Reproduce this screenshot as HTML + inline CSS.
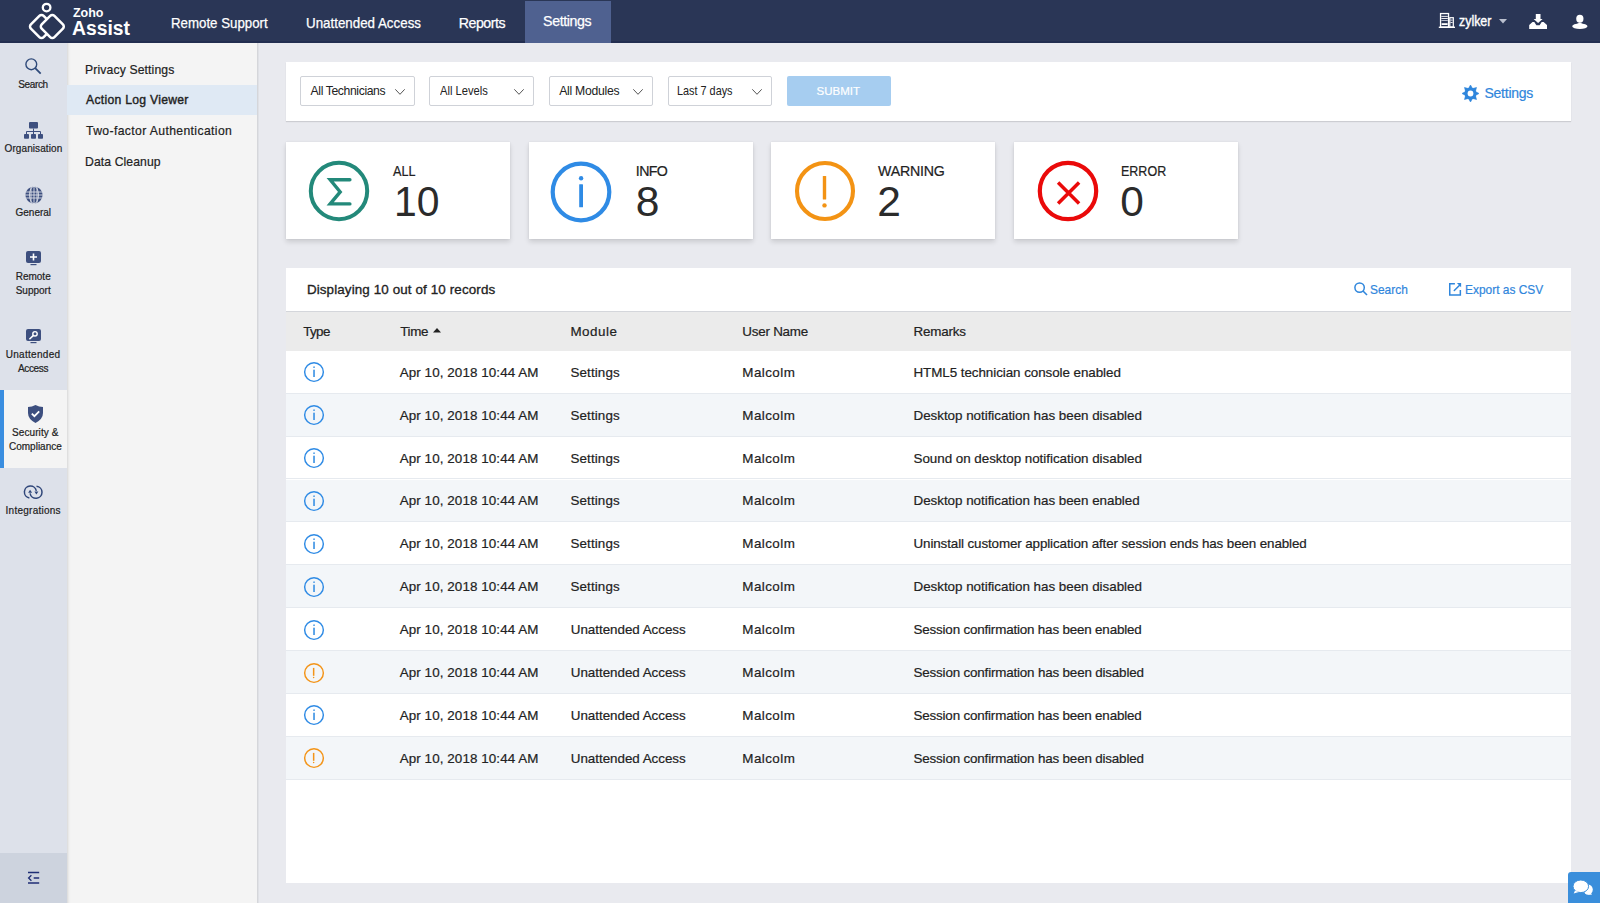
<!DOCTYPE html>
<html><head><meta charset="utf-8">
<style>
*{margin:0;padding:0;box-sizing:border-box}
html,body{width:1600px;height:903px;overflow:hidden}
body{font-family:"Liberation Sans",sans-serif;background:#e9eaef;position:relative;color:#222}
.abs{position:absolute}
svg{position:absolute;overflow:visible}
#hdr{left:0;top:0;width:1600px;height:43px;background:#2a3656;border-bottom:2px solid #222e50}
.nav{position:absolute;top:0;height:43px;line-height:44px;color:#fff;font-size:13.5px;white-space:nowrap}
#tab{left:525px;top:1px;width:86px;height:42px;background:#4f6190}
#side1{left:0;top:43px;width:67px;height:860px;background:#dde1ea}
.si{position:absolute;left:0;width:67px;text-align:center;font-size:10px;line-height:14px;color:#222}
#side2{left:67px;top:43px;width:191px;height:860px;background:#f4f4f4;border-right:1px solid #d5d6da;box-shadow:inset 4px 0 3px -3px rgba(0,0,0,0.13), 1px 0 0 #dfe1e6}
.s2{position:absolute;left:19px;font-size:12.5px;color:#222;white-space:nowrap}
.card{position:absolute;background:#fff}
.dd{position:absolute;top:76px;height:30px;border:1px solid #cfd2d8;border-radius:2px;background:#fff;font-size:11.4px;line-height:28px;padding-left:10px;color:#222;white-space:nowrap}
.dd svg{right:9px;top:12px}
.stat{position:absolute;top:142px;width:224px;height:97px;background:#fff;box-shadow:0 3px 5px rgba(0,0,0,0.13),0 0 2px rgba(0,0,0,0.07)}
.stat .lbl{position:absolute;left:106px;top:21px;font-size:13px;color:#222}
.stat .num{position:absolute;left:106px;top:36px;font-size:40px;color:#222;letter-spacing:-1px}
.stat svg{left:22px;top:18px}
.row{position:absolute;left:286px;width:1285px;height:42.9px;border-bottom:1px solid #e6eaef}
.row.alt{background:#f3f6f9}
.ti{left:16.75px;top:10.45px}
.c{position:absolute;top:0;line-height:42px;font-size:13px;color:#222;white-space:nowrap;letter-spacing:0.2px}
.ic{fill:#3d4f7f}
.t{position:absolute;white-space:nowrap;line-height:1}
.bm{display:inline-block;width:0;height:0}
</style></head><body>
<div id="hdr" class="abs">
  <div id="tab" class="abs"></div>
  <!-- logo -->
  <svg style="left:0;top:0" width="70" height="43" viewBox="0 0 70 43">
    <circle cx="46.6" cy="7.6" r="3.8" fill="none" stroke="#fff" stroke-width="2.3"/>
    <rect x="32.5" y="17.5" width="18" height="18" rx="3" transform="rotate(45 41.5 26.5)" fill="none" stroke="#fff" stroke-width="2.5"/>
    <rect x="43.3" y="17.5" width="18" height="18" rx="3" transform="rotate(45 52.3 26.5)" fill="#2a3656" stroke="#fff" stroke-width="2.5"/>
  </svg>
  <!-- building -->
  <svg style="left:1438px;top:12px" width="18" height="17" viewBox="0 0 18 17">
    <rect x="2.55" y="1.55" width="8" height="13.5" fill="none" stroke="#fff" stroke-width="1.3"/>
    <rect x="3.3" y="3.9" width="6.5" height="0.9" fill="#fff"/>
    <rect x="3.3" y="6.0" width="6.5" height="0.9" fill="#fff"/>
    <rect x="3.3" y="8.1" width="6.5" height="0.9" fill="#c8ccd8"/>
    <rect x="3.6" y="11.2" width="6" height="1.8" fill="#fff"/>
    <rect x="11.8" y="5.7" width="3.5" height="9.3" fill="none" stroke="#fff" stroke-width="1.2"/>
    <rect x="12.4" y="7.6" width="2.2" height="1" fill="#dfe2ea"/>
    <rect x="12.4" y="10" width="2.2" height="1" fill="#dfe2ea"/>
    <rect x="0.8" y="14.6" width="16.2" height="1.4" fill="#fff"/>
  </svg>
  <svg style="left:1499px;top:19px" width="8" height="5" viewBox="0 0 8 5"><path d="M0 0h8l-4 4.5z" fill="#b9bfce"/></svg>
  <!-- download tray -->
  <svg style="left:1528.5px;top:14px" width="19" height="15" viewBox="0 0 19 15">
    <path d="M6.8 0h4.7v5h2.1l-4.5 4l-4.5-4h2.2z" fill="#fff"/>
    <path d="M0.2 11L3.5 7.9H5.3L7.4 11.2H10.6L12.7 7.9H14.6L18 11V14.9H0.2z" fill="#fff"/>
  </svg>
  <!-- user -->
  <svg style="left:1571.5px;top:14px" width="16" height="15" viewBox="0 0 16 15">
    <ellipse cx="7.85" cy="4.75" rx="3.65" ry="3.95" fill="#fff"/>
    <ellipse cx="7.85" cy="12.2" rx="7.65" ry="2.75" fill="#fff"/>
    <path d="M4.5 10.2L7.85 8.6L11.2 10.2z" fill="#fff"/>
  </svg>
</div>
<div id="side1" class="abs">
  <!-- search -->
  <svg style="left:25px;top:15px" width="17" height="17" viewBox="0 0 17 17">
    <circle cx="6.3" cy="6.3" r="5.4" fill="none" stroke="#2f4a7a" stroke-width="1.4"/>
    <path d="M10.2 10.2l5.5 5.5" stroke="#2f4a7a" stroke-width="1.8"/>
  </svg>
  <!-- organisation -->
  <svg style="left:24px;top:79px" width="19" height="17" viewBox="0 0 19 17">
    <rect x="5" y="0" width="9" height="6.5" rx="1" class="ic"/>
    <path d="M9.5 6.5v3M2.5 12v-2.5h14v2.5M9.5 9.5v2.5" stroke="#3d4f7f" stroke-width="1" fill="none"/>
    <rect x="0" y="12" width="5" height="4.8" rx="0.8" class="ic"/>
    <rect x="7" y="12" width="5" height="4.8" rx="0.8" class="ic"/>
    <rect x="14" y="12" width="5" height="4.8" rx="0.8" class="ic"/>
  </svg>
  <!-- globe -->
  <svg style="left:24.5px;top:142.5px" width="18" height="18" viewBox="0 0 18 18">
    <circle cx="9" cy="9" r="8.6" class="ic"/>
    <path d="M0 6h18M0 9h18M0 12h18M6 0v18M9 0v18M12 0v18" stroke="#dce0e9" stroke-width="0.9"/>
    <ellipse cx="9" cy="9" rx="4.5" ry="8.6" fill="none" stroke="#dce0e9" stroke-width="0.9"/>
  </svg>
  <!-- remote support monitor -->
  <svg style="left:26px;top:208px" width="15" height="15" viewBox="0 0 15 15">
    <rect x="0" y="0" width="15" height="12" rx="2" class="ic"/>
    <path d="M7.5 2.5v7M4 6h7" stroke="#fff" stroke-width="1.6"/>
    <path d="M4.5 13.6h6" stroke="#3d4f7f" stroke-width="1.2"/>
  </svg>
  <!-- unattended monitor key -->
  <svg style="left:26px;top:286px" width="15" height="15" viewBox="0 0 15 15">
    <rect x="0" y="0" width="15" height="12" rx="2" class="ic"/>
    <circle cx="9" cy="4.8" r="2.2" fill="none" stroke="#fff" stroke-width="1.4"/>
    <path d="M7.4 6.4l-4 3.8" stroke="#fff" stroke-width="1.5"/>
    <path d="M4.5 13.6h6" stroke="#3d4f7f" stroke-width="1.2"/>
  </svg>
  <div class="abs" style="left:0;top:347px;width:67px;height:78px;background:#f4f4f4"></div>
  <div class="abs" style="left:0;top:347px;width:4px;height:78px;background:#3a8ee0"></div>
  <!-- shield -->
  <svg style="left:28px;top:362px" width="15" height="18" viewBox="0 0 15 18">
    <path d="M7.5 0q3.5 2 7.5 2v6q0 6-7.5 10q-7.5-4-7.5-10v-6q4 0 7.5-2z" class="ic"/>
    <path d="M3.8 8.6l2.6 2.6l4.8-4.8" stroke="#fff" stroke-width="1.8" fill="none"/>
  </svg>
  <!-- integrations -->
  <svg style="left:24px;top:442px" width="19" height="15" viewBox="0 0 19 15">
    <path d="M5.36 12.9A6 6 0 1 1 12.31 5.96" fill="none" stroke="#2f4679" stroke-width="1.5"/>
    <path d="M10.4 6.6h4l-2 3z" fill="#2f4679"/>
    <path d="M12.52 1.32A6 6 0 1 1 6.09 8.34" fill="none" stroke="#2f4679" stroke-width="1.5"/>
    <path d="M4.1 7.8h4l-2-3z" fill="#2f4679"/>
  </svg>
  <div class="abs" style="left:0;top:810px;width:67px;height:50px;background:#cdd3de"></div>
  <svg style="left:28px;top:829px" width="12" height="13" viewBox="0 0 12 13">
    <path d="M0 0.5h11.2M0 11h11.2M5.7 6h5.5" stroke="#1f2e75" stroke-width="1.3"/>
    <path d="M3.4 3.3L0.6 6l2.8 2.7" stroke="#1f2e75" stroke-width="1.3" fill="none"/>
  </svg>
</div>
<div id="side2" class="abs">
  <div class="abs" style="left:0;top:42px;width:190px;height:30px;background:#dfe9f4"></div>
</div>
<!-- filter card -->
<div class="card" style="left:286px;top:62px;width:1285px;height:59px;box-shadow:0 1px 1px rgba(0,0,0,0.12)"></div>
<div class="dd" style="left:300px;width:115px"><svg width="10" height="6" viewBox="0 0 10 6"><path d="M0.3 0.3l4.7 5l4.7-5" fill="none" stroke="#555" stroke-width="1"/></svg></div>
<div class="dd" style="left:429px;width:105px"><svg width="10" height="6" viewBox="0 0 10 6"><path d="M0.3 0.3l4.7 5l4.7-5" fill="none" stroke="#555" stroke-width="1"/></svg></div>
<div class="dd" style="left:549px;width:104px"><svg width="10" height="6" viewBox="0 0 10 6"><path d="M0.3 0.3l4.7 5l4.7-5" fill="none" stroke="#555" stroke-width="1"/></svg></div>
<div class="dd" style="left:668px;width:104px"><svg width="10" height="6" viewBox="0 0 10 6"><path d="M0.3 0.3l4.7 5l4.7-5" fill="none" stroke="#555" stroke-width="1"/></svg></div>
<div class="abs" style="left:787px;top:76px;width:104px;height:30px;background:#a6cdf0;border-radius:2px;color:#fff;font-size:11px;line-height:30px;text-align:center"></div>
<svg style="left:1462px;top:84.6px" width="17" height="17" viewBox="0 0 17 17">
  <polygon points="8.50,0.00 10.53,3.60 14.51,2.49 13.40,6.47 17.00,8.50 13.40,10.53 14.51,14.51 10.53,13.40 8.50,17.00 6.47,13.40 2.49,14.51 3.60,10.53 0.00,8.50 3.60,6.47 2.49,2.49 6.47,3.60" fill="#2f86dc" stroke="#2f86dc" stroke-width="0.6" stroke-linejoin="round"/>
  <circle cx="8.5" cy="8.5" r="5.9" fill="#2f86dc"/>
  <circle cx="8.5" cy="8.5" r="2.9" fill="#fff"/>
</svg>
<!-- stat cards -->
<div class="stat" style="left:286px"></div>
<div class="stat" style="left:529px"></div>
<div class="stat" style="left:771px"></div>
<div class="stat" style="left:1014px"></div>
<svg style="left:308.15px;top:160.1px" width="62" height="62" viewBox="0 0 62 62"><circle cx="31" cy="31" r="28.2" fill="none" stroke="#23897a" stroke-width="4"/><path d="M41.9 19.8H22.2L32.2 31.9L22.2 43.9H41.9" fill="none" stroke="#23897a" stroke-width="3.4" stroke-linecap="round" stroke-linejoin="miter" stroke-miterlimit="10"/></svg>
<svg style="left:550.4px;top:160.8px" width="62" height="62" viewBox="0 0 62 62"><circle cx="31" cy="31" r="28.3" fill="none" stroke="#2f8be5" stroke-width="4.2"/><rect x="29.2" y="23.2" width="3.8" height="23" rx="0.5" fill="#2f8be5"/><circle cx="31.1" cy="17.2" r="2.2" fill="#2f8be5"/></svg>
<svg style="left:794px;top:160.2px" width="62" height="62" viewBox="0 0 62 62"><circle cx="31" cy="31" r="28" fill="none" stroke="#f39314" stroke-width="4.1"/><rect x="28.8" y="15.9" width="3.4" height="23.7" rx="0.5" fill="#f39314"/><circle cx="30.5" cy="45.4" r="2.2" fill="#f39314"/></svg>
<svg style="left:1037px;top:160.35px" width="62" height="62" viewBox="0 0 62 62"><circle cx="31" cy="31" r="28.2" fill="none" stroke="#ea0a0a" stroke-width="4.2"/><path d="M21.1 22.4L42.1 43.4M42.1 22.4L21.1 43.4" stroke="#ea0a0a" stroke-width="3.5" stroke-linecap="butt"/></svg>
<!-- table card -->
<div class="card" style="left:286px;top:268px;width:1285px;height:615px"></div>
<div class="abs" style="left:286px;top:311px;width:1285px;height:1px;background:#d4d6db"></div>
<svg style="left:1354px;top:282px" width="14" height="14" viewBox="0 0 14 14"><circle cx="5.6" cy="5.6" r="4.7" fill="none" stroke="#2f86dc" stroke-width="1.5"/><path d="M9 9l4 4" stroke="#2f86dc" stroke-width="1.6"/></svg>
<svg style="left:1449px;top:283px" width="13" height="13" viewBox="0 0 13 13"><path d="M5.9 0.75H0.75V12.05H11.35V7" fill="none" stroke="#2f86dc" stroke-width="1.5"/><path d="M5.3 7.5L10.6 2.2" stroke="#2f86dc" stroke-width="1.5" stroke-linecap="round"/><path d="M7.9 0H12.1V4.2z" fill="#2f86dc"/></svg>
<div class="abs" style="left:286px;top:312px;width:1285px;height:39px;background:#ebebeb"></div>
<svg style="left:433px;top:328px" width="8" height="5" viewBox="0 0 8 5"><path d="M0 4.5l4-4.5l4 4.5z" fill="#222"/></svg>
<div class="row" style="top:350.80px"><svg class="ti" width="22" height="22" viewBox="0 0 22 22"><circle cx="11" cy="11" r="9.35" fill="none" stroke="#2f8be5" stroke-width="1.45"/><rect x="10.15" y="8.7" width="1.75" height="7.3" fill="#4a9ae6"/><circle cx="11.05" cy="6.2" r="0.85" fill="#4a9ae6"/></svg></div>
<div class="row alt" style="top:393.70px"><svg class="ti" width="22" height="22" viewBox="0 0 22 22"><circle cx="11" cy="11" r="9.35" fill="none" stroke="#2f8be5" stroke-width="1.45"/><rect x="10.15" y="8.7" width="1.75" height="7.3" fill="#4a9ae6"/><circle cx="11.05" cy="6.2" r="0.85" fill="#4a9ae6"/></svg></div>
<div class="row" style="top:436.60px"><svg class="ti" width="22" height="22" viewBox="0 0 22 22"><circle cx="11" cy="11" r="9.35" fill="none" stroke="#2f8be5" stroke-width="1.45"/><rect x="10.15" y="8.7" width="1.75" height="7.3" fill="#4a9ae6"/><circle cx="11.05" cy="6.2" r="0.85" fill="#4a9ae6"/></svg></div>
<div class="row alt" style="top:479.50px"><svg class="ti" width="22" height="22" viewBox="0 0 22 22"><circle cx="11" cy="11" r="9.35" fill="none" stroke="#2f8be5" stroke-width="1.45"/><rect x="10.15" y="8.7" width="1.75" height="7.3" fill="#4a9ae6"/><circle cx="11.05" cy="6.2" r="0.85" fill="#4a9ae6"/></svg></div>
<div class="row" style="top:522.40px"><svg class="ti" width="22" height="22" viewBox="0 0 22 22"><circle cx="11" cy="11" r="9.35" fill="none" stroke="#2f8be5" stroke-width="1.45"/><rect x="10.15" y="8.7" width="1.75" height="7.3" fill="#4a9ae6"/><circle cx="11.05" cy="6.2" r="0.85" fill="#4a9ae6"/></svg></div>
<div class="row alt" style="top:565.30px"><svg class="ti" width="22" height="22" viewBox="0 0 22 22"><circle cx="11" cy="11" r="9.35" fill="none" stroke="#2f8be5" stroke-width="1.45"/><rect x="10.15" y="8.7" width="1.75" height="7.3" fill="#4a9ae6"/><circle cx="11.05" cy="6.2" r="0.85" fill="#4a9ae6"/></svg></div>
<div class="row" style="top:608.20px"><svg class="ti" width="22" height="22" viewBox="0 0 22 22"><circle cx="11" cy="11" r="9.35" fill="none" stroke="#2f8be5" stroke-width="1.45"/><rect x="10.15" y="8.7" width="1.75" height="7.3" fill="#4a9ae6"/><circle cx="11.05" cy="6.2" r="0.85" fill="#4a9ae6"/></svg></div>
<div class="row alt" style="top:651.10px"><svg class="ti" width="22" height="22" viewBox="0 0 22 22"><circle cx="11" cy="11" r="9.35" fill="none" stroke="#f39418" stroke-width="1.45"/><rect x="9.9" y="5.9" width="1.5" height="7.9" fill="#f39418"/><circle cx="10.6" cy="15.5" r="0.75" fill="#f39418"/></svg></div>
<div class="row" style="top:694.00px"><svg class="ti" width="22" height="22" viewBox="0 0 22 22"><circle cx="11" cy="11" r="9.35" fill="none" stroke="#2f8be5" stroke-width="1.45"/><rect x="10.15" y="8.7" width="1.75" height="7.3" fill="#4a9ae6"/><circle cx="11.05" cy="6.2" r="0.85" fill="#4a9ae6"/></svg></div>
<div class="row alt" style="top:736.90px"><svg class="ti" width="22" height="22" viewBox="0 0 22 22"><circle cx="11" cy="11" r="9.35" fill="none" stroke="#f39418" stroke-width="1.45"/><rect x="9.9" y="5.9" width="1.5" height="7.9" fill="#f39418"/><circle cx="10.6" cy="15.5" r="0.75" fill="#f39418"/></svg></div>
<div class="t" id="zoho" style="left:72.90px;top:6.60px;font-size:12.5px;letter-spacing:-0.000px;color:#ffffff;font-weight:bold;">Zoho</div>
<div class="t" id="assist" style="left:71.60px;top:17.91px;font-size:20px;letter-spacing:0.000px;color:#ffffff;transform:scaleX(0.9644);transform-origin:0 0;font-weight:bold;">Assist</div>
<div class="t" id="nav1" style="left:171.10px;top:15.70px;font-size:14.2px;letter-spacing:0.000px;color:#ffffff;transform:scaleX(0.9354);transform-origin:0 0;-webkit-text-stroke:0.25px #fff;">Remote Support</div>
<div class="t" id="nav2" style="left:305.62px;top:15.70px;font-size:14.2px;letter-spacing:0.000px;color:#ffffff;transform:scaleX(0.9405);transform-origin:0 0;-webkit-text-stroke:0.25px #fff;">Unattended Access</div>
<div class="t" id="nav3" style="left:458.70px;top:15.81px;font-size:14.2px;letter-spacing:-0.450px;color:#ffffff;-webkit-text-stroke:0.25px #fff;">Reports</div>
<div class="t" id="nav4" style="left:543.10px;top:14.21px;font-size:14.2px;letter-spacing:-0.386px;color:#ffffff;-webkit-text-stroke:0.25px #fff;">Settings</div>
<div class="t" id="zylker" style="left:1459.44px;top:13.70px;font-size:14px;letter-spacing:0.000px;color:#ffffff;transform:scaleX(0.8859);transform-origin:0 0;-webkit-text-stroke:0.4px #fff;">zylker</div>
<div class="t" id="sb_search" style="left:18.30px;top:80.40px;font-size:10px;letter-spacing:-0.360px;color:#222222;-webkit-text-stroke:0.2px #222222;">Search</div>
<div class="t" id="sb_org" style="left:4.60px;top:144.10px;font-size:10px;letter-spacing:0.082px;color:#222222;-webkit-text-stroke:0.2px #222222;">Organisation</div>
<div class="t" id="sb_gen" style="left:15.50px;top:208.22px;font-size:10px;letter-spacing:0.000px;color:#222222;-webkit-text-stroke:0.2px #222222;">General</div>
<div class="t" id="sb_rs1" style="left:15.70px;top:272.00px;font-size:10px;letter-spacing:-0.000px;color:#222222;-webkit-text-stroke:0.2px #222222;">Remote</div>
<div class="t" id="sb_rs2" style="left:15.70px;top:285.90px;font-size:10px;letter-spacing:-0.000px;color:#222222;-webkit-text-stroke:0.2px #222222;">Support</div>
<div class="t" id="sb_ua1" style="left:5.70px;top:350.00px;font-size:10px;letter-spacing:0.300px;color:#222222;-webkit-text-stroke:0.2px #222222;">Unattended</div>
<div class="t" id="sb_ua2" style="left:18.00px;top:364.40px;font-size:10px;letter-spacing:-0.360px;color:#222222;-webkit-text-stroke:0.2px #222222;">Access</div>
<div class="t" id="sb_sc1" style="left:12.00px;top:428.00px;font-size:10px;letter-spacing:0.100px;color:#222222;-webkit-text-stroke:0.2px #222222;">Security &amp;</div>
<div class="t" id="sb_sc2" style="left:9.00px;top:442.00px;font-size:10px;letter-spacing:0.000px;color:#222222;-webkit-text-stroke:0.2px #222222;">Compliance</div>
<div class="t" id="sb_int" style="left:5.60px;top:506.32px;font-size:10px;letter-spacing:0.245px;color:#222222;-webkit-text-stroke:0.2px #222222;">Integrations</div>
<div class="t" id="s2_priv" style="left:85.10px;top:64.30px;font-size:12.2px;letter-spacing:0.120px;color:#222222;-webkit-text-stroke:0.2px #222222;">Privacy Settings</div>
<div class="t" id="s2_alv" style="left:86.00px;top:94.40px;font-size:12.2px;letter-spacing:0.276px;color:#222222;-webkit-text-stroke:0.38px #222;">Action Log Viewer</div>
<div class="t" id="s2_2fa" style="left:86.00px;top:125.00px;font-size:12.2px;letter-spacing:0.375px;color:#222222;-webkit-text-stroke:0.2px #222222;">Two-factor Authentication</div>
<div class="t" id="s2_dc" style="left:85.10px;top:155.60px;font-size:12.2px;letter-spacing:0.082px;color:#222222;-webkit-text-stroke:0.2px #222222;">Data Cleanup</div>
<div class="t" id="f1" style="left:310.60px;top:85.00px;font-size:12.2px;letter-spacing:-0.386px;color:#222222;">All Technicians</div>
<div class="t" id="f2" style="left:440.00px;top:85.00px;font-size:12.2px;letter-spacing:0.000px;color:#222222;transform:scaleX(0.9171);transform-origin:0 0;">All Levels</div>
<div class="t" id="f3" style="left:559.20px;top:85.00px;font-size:12.2px;letter-spacing:-0.270px;color:#222222;">All Modules</div>
<div class="t" id="f4" style="left:677.14px;top:85.00px;font-size:12.2px;letter-spacing:0.000px;color:#222222;transform:scaleX(0.8909);transform-origin:0 0;">Last 7 days</div>
<div class="t" id="submit" style="left:816.50px;top:86.01px;font-size:11.5px;letter-spacing:0.000px;color:#ffffff;-webkit-text-stroke:0.2px #fff;">SUBMIT</div>
<div class="t" id="setlink" style="left:1484.50px;top:86.11px;font-size:14px;letter-spacing:-0.257px;color:#2f86dc;-webkit-text-stroke:0.2px #2f86dc;">Settings</div>
<div class="t" id="l_all" style="left:392.98px;top:163.82px;font-size:14.2px;letter-spacing:0.000px;color:#222222;transform:scaleX(0.8931);transform-origin:0 0;-webkit-text-stroke:0.2px #222222;">ALL</div>
<div class="t" id="n_all" style="left:393.57px;top:180.61px;font-size:42.5px;letter-spacing:0.000px;color:#2b2b2b;transform:scaleX(0.9625);transform-origin:0 0;">10</div>
<div class="t" id="l_info" style="left:635.80px;top:163.80px;font-size:14.2px;letter-spacing:-0.600px;color:#222222;-webkit-text-stroke:0.2px #222222;">INFO</div>
<div class="t" id="n_info" style="left:635.78px;top:180.51px;font-size:42.5px;letter-spacing:0.000px;color:#2b2b2b;">8</div>
<div class="t" id="l_warn" style="left:878.10px;top:163.80px;font-size:14.2px;letter-spacing:-0.225px;color:#222222;-webkit-text-stroke:0.2px #222222;">WARNING</div>
<div class="t" id="n_warn" style="left:877.27px;top:180.51px;font-size:42.5px;letter-spacing:0.000px;color:#2b2b2b;">2</div>
<div class="t" id="l_err" style="left:1120.64px;top:163.82px;font-size:14.2px;letter-spacing:0.000px;color:#222222;transform:scaleX(0.8815);transform-origin:0 0;-webkit-text-stroke:0.2px #222222;">ERROR</div>
<div class="t" id="n_err" style="left:1120.19px;top:180.51px;font-size:42.5px;letter-spacing:0.000px;color:#2b2b2b;">0</div>
<div class="t" id="disp" style="left:306.89px;top:282.71px;font-size:13.4px;letter-spacing:0.123px;color:#222222;-webkit-text-stroke:0.32px #222;">Displaying 10 out of 10 records</div>
<div class="t" id="tsearch" style="left:1370.20px;top:283.30px;font-size:13px;letter-spacing:0.000px;color:#2f86dc;transform:scaleX(0.9182);transform-origin:0 0;-webkit-text-stroke:0.2px #2f86dc;">Search</div>
<div class="t" id="texport" style="left:1464.60px;top:283.31px;font-size:13px;letter-spacing:0.000px;color:#2f86dc;transform:scaleX(0.9180);transform-origin:0 0;-webkit-text-stroke:0.2px #2f86dc;">Export as CSV</div>
<div class="t" id="h_type" style="left:303.20px;top:324.82px;font-size:13.4px;letter-spacing:-0.600px;color:#222222;-webkit-text-stroke:0.2px #222222;">Type</div>
<div class="t" id="h_time" style="left:400.20px;top:324.82px;font-size:13.4px;letter-spacing:-0.300px;color:#222222;-webkit-text-stroke:0.2px #222222;">Time</div>
<div class="t" id="h_mod" style="left:570.40px;top:324.82px;font-size:13.4px;letter-spacing:0.540px;color:#222222;-webkit-text-stroke:0.2px #222222;">Module</div>
<div class="t" id="h_user" style="left:742.30px;top:324.82px;font-size:13.4px;letter-spacing:-0.225px;color:#222222;-webkit-text-stroke:0.2px #222222;">User Name</div>
<div class="t" id="h_rem" style="left:913.40px;top:324.82px;font-size:13.4px;letter-spacing:-0.150px;color:#222222;-webkit-text-stroke:0.2px #222222;">Remarks</div>
<div class="t" id="r0_date" style="left:399.70px;top:365.75px;font-size:13.4px;letter-spacing:0.090px;color:#222222;-webkit-text-stroke:0.2px #222222;">Apr 10, 2018 10:44 AM</div>
<div class="t" id="r0_mod" style="left:570.40px;top:365.75px;font-size:13.4px;letter-spacing:0.129px;color:#222222;-webkit-text-stroke:0.2px #222222;">Settings</div>
<div class="t" id="r0_user" style="left:742.30px;top:365.75px;font-size:13.4px;letter-spacing:0.450px;color:#222222;-webkit-text-stroke:0.2px #222222;">Malcolm</div>
<div class="t" id="r0_rem" style="left:913.50px;top:365.75px;font-size:13.4px;letter-spacing:-0.058px;color:#222222;-webkit-text-stroke:0.2px #222222;">HTML5 technician console enabled</div>
<div class="t" id="r1_date" style="left:399.70px;top:408.64px;font-size:13.4px;letter-spacing:0.090px;color:#222222;-webkit-text-stroke:0.2px #222222;">Apr 10, 2018 10:44 AM</div>
<div class="t" id="r1_mod" style="left:570.40px;top:408.64px;font-size:13.4px;letter-spacing:0.129px;color:#222222;-webkit-text-stroke:0.2px #222222;">Settings</div>
<div class="t" id="r1_user" style="left:742.30px;top:408.64px;font-size:13.4px;letter-spacing:0.450px;color:#222222;-webkit-text-stroke:0.2px #222222;">Malcolm</div>
<div class="t" id="r1_rem" style="left:913.50px;top:408.64px;font-size:13.4px;letter-spacing:-0.024px;color:#222222;-webkit-text-stroke:0.2px #222222;">Desktop notification has been disabled</div>
<div class="t" id="r2_date" style="left:399.70px;top:451.52px;font-size:13.4px;letter-spacing:0.090px;color:#222222;-webkit-text-stroke:0.2px #222222;">Apr 10, 2018 10:44 AM</div>
<div class="t" id="r2_mod" style="left:570.40px;top:451.52px;font-size:13.4px;letter-spacing:0.129px;color:#222222;-webkit-text-stroke:0.2px #222222;">Settings</div>
<div class="t" id="r2_user" style="left:742.30px;top:451.52px;font-size:13.4px;letter-spacing:0.450px;color:#222222;-webkit-text-stroke:0.2px #222222;">Malcolm</div>
<div class="t" id="r2_rem" style="left:913.50px;top:451.52px;font-size:13.4px;letter-spacing:-0.024px;color:#222222;-webkit-text-stroke:0.2px #222222;">Sound on desktop notification disabled</div>
<div class="t" id="r3_date" style="left:399.70px;top:494.40px;font-size:13.4px;letter-spacing:0.090px;color:#222222;-webkit-text-stroke:0.2px #222222;">Apr 10, 2018 10:44 AM</div>
<div class="t" id="r3_mod" style="left:570.40px;top:494.40px;font-size:13.4px;letter-spacing:0.129px;color:#222222;-webkit-text-stroke:0.2px #222222;">Settings</div>
<div class="t" id="r3_user" style="left:742.30px;top:494.40px;font-size:13.4px;letter-spacing:0.450px;color:#222222;-webkit-text-stroke:0.2px #222222;">Malcolm</div>
<div class="t" id="r3_rem" style="left:913.50px;top:494.40px;font-size:13.4px;letter-spacing:-0.025px;color:#222222;-webkit-text-stroke:0.2px #222222;">Desktop notification has been enabled</div>
<div class="t" id="r4_date" style="left:399.70px;top:537.28px;font-size:13.4px;letter-spacing:0.090px;color:#222222;-webkit-text-stroke:0.2px #222222;">Apr 10, 2018 10:44 AM</div>
<div class="t" id="r4_mod" style="left:570.40px;top:537.28px;font-size:13.4px;letter-spacing:0.129px;color:#222222;-webkit-text-stroke:0.2px #222222;">Settings</div>
<div class="t" id="r4_user" style="left:742.30px;top:537.28px;font-size:13.4px;letter-spacing:0.450px;color:#222222;-webkit-text-stroke:0.2px #222222;">Malcolm</div>
<div class="t" id="r4_rem" style="left:913.50px;top:537.28px;font-size:13.4px;letter-spacing:-0.111px;color:#222222;-webkit-text-stroke:0.2px #222222;">Uninstall customer application after session ends has been enabled</div>
<div class="t" id="r5_date" style="left:399.70px;top:580.16px;font-size:13.4px;letter-spacing:0.090px;color:#222222;-webkit-text-stroke:0.2px #222222;">Apr 10, 2018 10:44 AM</div>
<div class="t" id="r5_mod" style="left:570.40px;top:580.16px;font-size:13.4px;letter-spacing:0.129px;color:#222222;-webkit-text-stroke:0.2px #222222;">Settings</div>
<div class="t" id="r5_user" style="left:742.30px;top:580.16px;font-size:13.4px;letter-spacing:0.450px;color:#222222;-webkit-text-stroke:0.2px #222222;">Malcolm</div>
<div class="t" id="r5_rem" style="left:913.50px;top:580.16px;font-size:13.4px;letter-spacing:-0.024px;color:#222222;-webkit-text-stroke:0.2px #222222;">Desktop notification has been disabled</div>
<div class="t" id="r6_date" style="left:399.70px;top:623.04px;font-size:13.4px;letter-spacing:0.090px;color:#222222;-webkit-text-stroke:0.2px #222222;">Apr 10, 2018 10:44 AM</div>
<div class="t" id="r6_mod" style="left:570.80px;top:623.04px;font-size:13.4px;letter-spacing:-0.028px;color:#222222;-webkit-text-stroke:0.2px #222222;">Unattended Access</div>
<div class="t" id="r6_user" style="left:742.30px;top:623.04px;font-size:13.4px;letter-spacing:0.450px;color:#222222;-webkit-text-stroke:0.2px #222222;">Malcolm</div>
<div class="t" id="r6_rem" style="left:913.50px;top:623.04px;font-size:13.4px;letter-spacing:-0.175px;color:#222222;-webkit-text-stroke:0.2px #222222;">Session confirmation has been enabled</div>
<div class="t" id="r7_date" style="left:399.70px;top:665.92px;font-size:13.4px;letter-spacing:0.090px;color:#222222;-webkit-text-stroke:0.2px #222222;">Apr 10, 2018 10:44 AM</div>
<div class="t" id="r7_mod" style="left:570.80px;top:665.92px;font-size:13.4px;letter-spacing:-0.028px;color:#222222;-webkit-text-stroke:0.2px #222222;">Unattended Access</div>
<div class="t" id="r7_user" style="left:742.30px;top:665.92px;font-size:13.4px;letter-spacing:0.450px;color:#222222;-webkit-text-stroke:0.2px #222222;">Malcolm</div>
<div class="t" id="r7_rem" style="left:913.50px;top:665.92px;font-size:13.4px;letter-spacing:-0.170px;color:#222222;-webkit-text-stroke:0.2px #222222;">Session confirmation has been disabled</div>
<div class="t" id="r8_date" style="left:399.70px;top:708.80px;font-size:13.4px;letter-spacing:0.090px;color:#222222;-webkit-text-stroke:0.2px #222222;">Apr 10, 2018 10:44 AM</div>
<div class="t" id="r8_mod" style="left:570.80px;top:708.80px;font-size:13.4px;letter-spacing:-0.028px;color:#222222;-webkit-text-stroke:0.2px #222222;">Unattended Access</div>
<div class="t" id="r8_user" style="left:742.30px;top:708.80px;font-size:13.4px;letter-spacing:0.450px;color:#222222;-webkit-text-stroke:0.2px #222222;">Malcolm</div>
<div class="t" id="r8_rem" style="left:913.50px;top:708.80px;font-size:13.4px;letter-spacing:-0.175px;color:#222222;-webkit-text-stroke:0.2px #222222;">Session confirmation has been enabled</div>
<div class="t" id="r9_date" style="left:399.70px;top:751.68px;font-size:13.4px;letter-spacing:0.090px;color:#222222;-webkit-text-stroke:0.2px #222222;">Apr 10, 2018 10:44 AM</div>
<div class="t" id="r9_mod" style="left:570.80px;top:751.68px;font-size:13.4px;letter-spacing:-0.028px;color:#222222;-webkit-text-stroke:0.2px #222222;">Unattended Access</div>
<div class="t" id="r9_user" style="left:742.30px;top:751.68px;font-size:13.4px;letter-spacing:0.450px;color:#222222;-webkit-text-stroke:0.2px #222222;">Malcolm</div>
<div class="t" id="r9_rem" style="left:913.50px;top:751.68px;font-size:13.4px;letter-spacing:-0.170px;color:#222222;-webkit-text-stroke:0.2px #222222;">Session confirmation has been disabled</div>
<!-- chat -->
<div class="abs" style="left:1568px;top:872px;width:40px;height:40px;background:#3a8edb;border-radius:3px"></div>
<svg style="left:1568px;top:872px" width="32" height="31" viewBox="0 0 32 31">
  <ellipse cx="20.2" cy="17.6" rx="4.6" ry="5.2" fill="#fff"/>
  <path d="M22.5 21l1.5 1.8l-4.5-0.3z" fill="#fff"/>
  <ellipse cx="12.8" cy="14.3" rx="7.8" ry="6.3" fill="#fff" stroke="#3a8edb" stroke-width="1"/>
  <path d="M7 18.5l-1.3 3l5-1.5z" fill="#fff"/>
</svg>
</body></html>
